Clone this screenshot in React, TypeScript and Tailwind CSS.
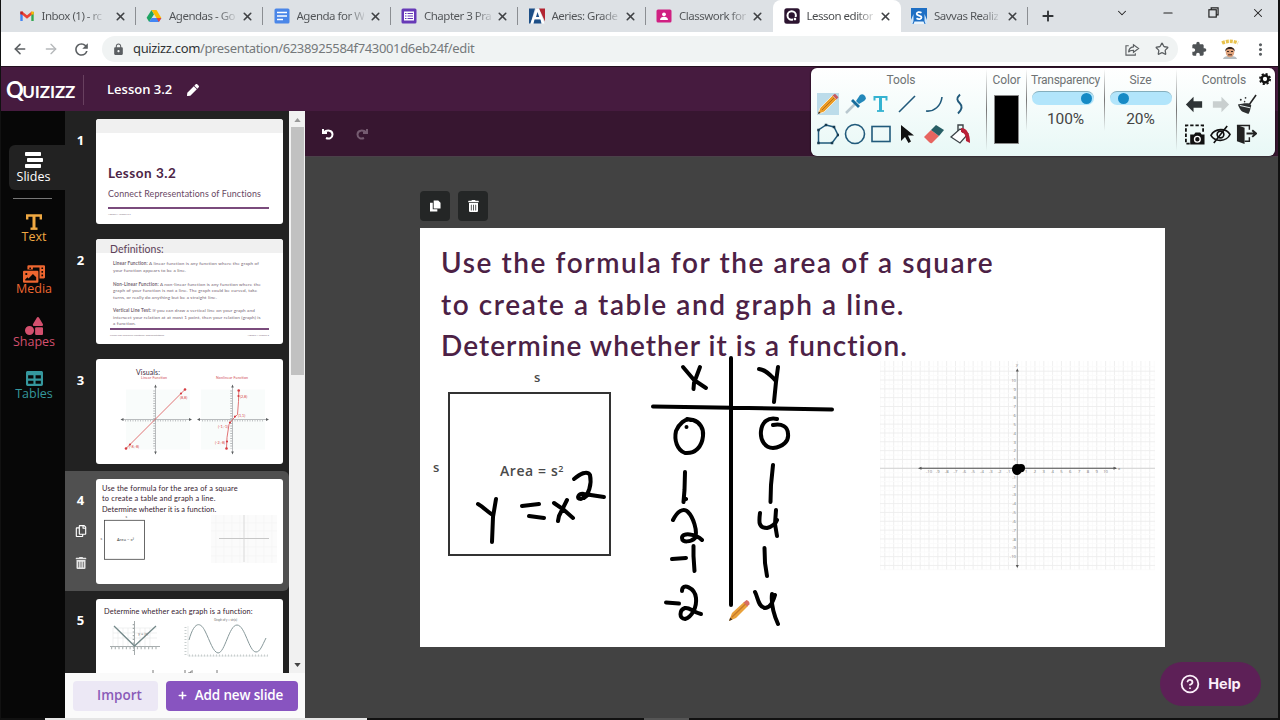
import React from 'react';
import { ArrowLeft, ArrowRight, Star, ChevronDown, Minus, Plus, X, CircleHelp } from 'lucide-react';
import { MdRefresh, MdLock, MdExtension, MdMoreVert } from 'react-icons/md';
import { FaTable, FaShapes, FaTrashAlt, FaRegCopy, FaPhotoVideo, FaPen } from 'react-icons/fa';

function Gmail() {
  return (
    <svg viewBox="0 0 16 16" className="h-4 w-4">
      <path d="M2.500 13V4" stroke="#4285f4" strokeWidth="2.400" />
      <path d="M13.500 13V4" stroke="#34a853" strokeWidth="2.400" />
      <path d="M2.500 4.500L8 9l5.500-4.500" fill="none" stroke="#ea4335" strokeWidth="2.600" />
      <path d="M12.300 3.400h2.400v3h-2.400z" fill="#fbbc04" />
      <path d="M1.300 3.400h2.400v3H1.300z" fill="#c5221f" />
    </svg>
  );
}
function Drive() {
  return (
    <svg viewBox="0 0 16 16" className="h-4 w-4">
      <path d="M5.500 2L8 6.300 3.200 14 .6 9.800z" fill="#1fa463" />
      <path d="M5.500 2h5l4.900 8h-4.900z" fill="#fbbc04" />
      <path d="M3.200 14l2.300-4h9.900l-2.500 4z" fill="#4285f4" />
      <path d="M12.900 14l-2.400-4h4.900z" fill="#ea4335" />
    </svg>
  );
}
function Docs() {
  return (
    <svg viewBox="0 0 16 16" className="h-4 w-4">
      <rect x=".5" y=".5" width="15" height="15" rx="1.500" fill="#4a86e8" />
      <path d="M3 4.500h10M3 8h10M3 11.500h6" stroke="#fff" strokeWidth="1.700" />
    </svg>
  );
}
function Forms() {
  return (
    <svg viewBox="0 0 16 16" className="h-4 w-4">
      <rect x=".5" y=".5" width="15" height="15" rx="1.500" fill="#673ab7" />
      <rect x="3" y="3.500" width="10" height="9" fill="#fff" />
      <path d="M4 5.500h1.500M4 8h1.500M4 10.500h1.500M6.500 5.500H12M6.500 8H12M6.500 10.500H12" stroke="#673ab7" strokeWidth="1.200" />
    </svg>
  );
}
function Aeries() {
  return (
    <svg viewBox="0 0 16 16" className="h-4 w-4">
      <path d="M0 .5h6L1.500 15.500H0z" fill="#1d4f87" />
      <path d="M10 .5h6v13z" fill="#b32431" />
      <path d="M1.500 15.500L7 1h3l5.500 14.500h-3.300L11 11H6L4.500 15.500z" fill="#fff" />
      <path d="M7 9l1.500-5L10.200 9z" fill="#1d4f87" />
      <path d="M5.500 11.500h6l1 4h-8z" fill="#1d4f87" />
    </svg>
  );
}
function Classroom() {
  return (
    <svg viewBox="0 0 16 16" className="h-4 w-4">
      <rect x=".5" y="1.500" width="15" height="13" rx="1.500" fill="#d02082" />
      <circle cx="8" cy="6.300" r="1.900" fill="#fff" />
      <path d="M4 12c0-2.500 2-3.300 4-3.300s4 .8 4 3.300z" fill="#fff" />
    </svg>
  );
}
function Quiz() {
  return (
    <svg viewBox="0 0 16 16" className="h-4 w-4">
      <rect x=".3" y=".3" width="15.400" height="15.400" rx="2.500" fill="#2c1430" />
      <circle cx="7.700" cy="7.500" r="4.200" fill="none" stroke="#fff" strokeWidth="2" />
      <rect x="9.400" y="9.500" width="3.200" height="3.200" fill="#fff" stroke="#2c1430" strokeWidth=".8" />
    </svg>
  );
}
function Savvas() {
  return (
    <svg viewBox="0 0 16 16" className="h-4 w-4">
      <rect width="16" height="16" fill="#1e6fc4" />
      <path d="M0 12l2.500-6v7l-1 3H0zM16 12l-2.500-6v7l1 3H16z" fill="#cfe6fa" />
      <path d="M2.500 16l1-2.500h9l1 2.500z" fill="#e8f4fd" />
      <path d="M10.500 4.800C8.500 3.500 5.700 4 5.700 5.900s4.800 1.400 4.800 3.400-3 2.300-5 1" fill="none" stroke="#fff" strokeWidth="1.800" />
    </svg>
  );
}

const tabs = [
  { icon: <Gmail />, title: 'Inbox (1) - rc' },
  { icon: <Drive />, title: 'Agendas - Go' },
  { icon: <Docs />, title: 'Agenda for W' },
  { icon: <Forms />, title: 'Chapter 3 Pra' },
  { icon: <Aeries />, title: 'Aeries: Grade' },
  { icon: <Classroom />, title: 'Classwork for' },
  { icon: <Quiz />, title: 'Lesson editor', active: true },
  { icon: <Savvas />, title: 'Savvas Realiz' },
];

function TabStrip() {
  return (
    <div className="flex h-8 shrink-0 bg-[#dde1e5] pl-[7px] font-['Noto_Sans','Open_Sans',sans-serif] text-[11.500px] text-[#505356]">
      {tabs.map((t, i) => (
        <div
          key={t.title}
          className={
            t.active
              ? 'flex w-[127.500px] items-center rounded-t-lg bg-white pl-[10.500px]'
              : 'flex w-[127.500px] items-center pl-[10.500px]'
          }
        >
          {t.icon}
          <span
            className={
              t.active
                ? 'mr-auto ml-[7px] bg-gradient-to-r from-[#454749] from-75% to-[#45474930] bg-clip-text tracking-[-0.500px] whitespace-nowrap text-transparent'
                : 'mr-auto ml-[7px] bg-gradient-to-r from-[#505356] from-75% to-[#50535630] bg-clip-text tracking-[-0.500px] whitespace-nowrap text-transparent'
            }
          >
            {t.title}
          </span>
          <X className="mr-[8px] h-[13px] w-[13px] text-[#3f4245]" strokeWidth={3} />
          <span className={i === 5 || i === 6 ? 'h-[18px] w-px' : 'h-[18px] w-px bg-[#8b8e92]'} />
        </div>
      ))}
      <Plus className="mt-[8px] ml-[12px] h-4 w-4 text-[#303336]" strokeWidth={2.800} />
      <div className="ml-auto flex w-[163px] items-start justify-between pt-[6px] pr-[13px] text-[#222]">
        <ChevronDown className="h-[14px] w-[14px]" strokeWidth={1.800} />
        <Minus className="h-[14px] w-[14px]" strokeWidth={2} />
        <svg viewBox="0 0 12 12" className="mt-[1px] h-[11px] w-[11px]" fill="none" stroke="#222" strokeWidth="1.300">
          <rect x="1" y="3" width="8" height="8" />
          <path d="M3.500 3V1H11v7.500H9" />
        </svg>
        <X className="h-[14px] w-[14px]" strokeWidth={1.800} />
      </div>
    </div>
  );
}

function AddressBar() {
  return (
    <div className="flex h-[34px] shrink-0 items-center bg-white font-['Noto_Sans','Open_Sans',sans-serif] text-[#5b5f62]">
      <ArrowLeft className="ml-[11px] h-4 w-4" strokeWidth={2.300} />
      <ArrowRight className="ml-[15px] h-4 w-4 text-[#b5b8ba]" strokeWidth={2} />
      <MdRefresh className="ml-[13px] h-[19px] w-[19px]" />
      <div className="ml-[11px] flex h-[26px] w-[1076px] items-center rounded-full bg-[#f0f3f3] pl-[10px]">
        <MdLock className="h-[13px] w-[13px]" />
        <span className="ml-[8px] text-[13px] tracking-[-0.350px] text-[#75797b]">
          <span className="text-[#303336]">quizizz.com</span>/presentation/6238925584f743001d6eb24f/edit
        </span>
        <svg viewBox="0 0 16 16" className="mr-[15px] ml-auto h-[15px] w-[15px]" fill="none" stroke="#5b5f62" strokeWidth="1.200">
          <path d="M4 4H1v10h10v-2M9 3l5.500 4L9 11V8.800C6 8.800 4.500 9.500 3.800 11 4 7.500 6 5.500 9 5.200z" />
        </svg>
        <Star className="mr-[9px] h-[14px] w-[14px]" strokeWidth={2.200} />
      </div>
      <MdExtension className="ml-[13px] h-4 w-4 text-[#4f5356]" />
      <svg viewBox="0 0 20 22" className="ml-[13px] h-[22px] w-5">
        <path d="M2 5Q10 1.500 18 5" fill="none" stroke="#e8c24e" strokeWidth="3.500" strokeDasharray="3 1" />
        <path d="M3 21c1-3 4-3 7-3s6 0 7 3z" fill="#b5bcc0" />
        <ellipse cx="10" cy="14" rx="4.300" ry="5.300" fill="#dfa27c" />
        <path d="M5.300 13.500c-.6-6 10-6 9.400 0-1-2-2-2.500-4.700-2.500s-3.700.5-4.700 2.500z" fill="#33241f" />
        <path d="M7 13.500h2M11 13.500h2M8 16.800h4" stroke="#3d2821" strokeWidth="1" />
      </svg>
      <MdMoreVert className="ml-[11px] h-[19px] w-[19px]" />
    </div>
  );
}

function AppHeader() {
  return (
    <div className="flex h-[45px] shrink-0 items-center bg-[#461b3f] text-white">
      <div className="flex w-[76px] items-baseline pl-[5px] font-['Lato',sans-serif] font-bold">
        <span className="text-[22px] leading-none tracking-[-1.500px]">Q</span>
        <span className="text-[17px] leading-none tracking-[-0.100px]">UIZIZZ</span>
      </div>
      <div className="ml-[6px] h-[30px] w-px bg-[#68405f]" />
      <span className="ml-[23px] w-[66px] font-['Open_Sans',sans-serif] text-[13px] font-semibold whitespace-nowrap">Lesson 3.2</span>
      <FaPen className="ml-[14px] h-[12px] w-[12px]" />
    </div>
  );
}

function Rail() {
  const items = [
    {
      label: 'Text',
      color: 'text-[#f0a943]',
      icon: (
        <svg viewBox="0 0 16 16" className="h-4 w-4" fill="none" stroke="currentColor">
          <path d="M1.200 5.500V1.500h13.600v4" strokeWidth="2.400" />
          <path d="M8 1v14" strokeWidth="3" />
          <path d="M4.500 14.700h7" strokeWidth="2.400" />
        </svg>
      ),
    },
    { label: 'Media', color: 'text-[#ed6630]', icon: <FaPhotoVideo className="h-[18px] w-[22px]" /> },
    { label: 'Shapes', color: 'text-[#d3506e]', icon: <FaShapes className="h-[18px] w-[18px]" /> },
    { label: 'Tables', color: 'text-[#35979d]', icon: <FaTable className="h-[17px] w-[17px]" /> },
  ];
  return (
    <div className="w-[64px] shrink-0 bg-[#070707] pt-[34px] font-['Open_Sans',sans-serif] text-[12.500px]">
      <div className="ml-[8px] flex h-[45px] w-[56px] flex-col items-center rounded-l-md bg-[#222] pt-[7px] pr-[7px] text-white">
        <svg viewBox="0 0 18 16" className="h-4 w-[18px]" fill="#fff">
          <rect x="0" y="0" width="16" height="4" rx=".8" />
          <rect x="2" y="6" width="16" height="4" rx=".8" />
          <rect x="0" y="12" width="16" height="4" rx=".8" />
        </svg>
        <span className="leading-[17px]">Slides</span>
      </div>
      <div className="mt-[8px] ml-[12px] h-px w-[39px] bg-[#777]" />
      <div className="flex flex-col pt-[13px] pl-[2px]">
        {items.map((it) => (
          <div key={it.label} className={'flex h-[52.300px] flex-col items-center ' + it.color}>
            <span className="flex h-[19px] items-center justify-center">{it.icon}</span>
            <span className="leading-[12px]">{it.label}</span>
          </div>
        ))}
      </div>
    </div>
  );
}

function Thumb1() {
  return (
    <div className="h-full font-['Lato',sans-serif] text-[#4c2547]">
      <div className="h-[14px] bg-[#f0f0f0]" />
      <div className="px-[12px] pt-[31px]">
        <div className="text-[13.500px] leading-[18px] font-bold tracking-[0.500px]">Lesson 3.2</div>
        <div className="mt-[5px] text-[8.900px] leading-[13px] tracking-[0.130px] whitespace-nowrap text-[#674763]">Connect Representations of Functions</div>
        <div className="mt-[7px] h-[1.500px] w-[161px] bg-[#7a4b7c]" />
        <div className="mt-[4px] text-[2.500px] leading-[4px] text-[#8a7a88]">Algebra 1 Lesson 3.2</div>
      </div>
    </div>
  );
}
function Thumb2() {
  return (
    <div className="h-full font-['Lato',sans-serif] text-[#5d4159]">
      <div className="h-[14px] bg-[#f0f0f0] pl-[14px] text-[10.500px] leading-[20px] tracking-[0.030px]">Definitions:</div>
      <div className="pt-[7px] pl-[17px] text-[4.600px] leading-[6.650px] tracking-[0.130px] whitespace-nowrap text-[#756673]">
        <p><b>Linear Function:</b> A linear function is any function where the graph of</p>
        <p>your function appears to be a line.</p>
        <p className="mt-[7.300px]"><b>Non-Linear Function:</b> A non-linear function is any function where the</p>
        <p>graph of your function is not a line. The graph could be curved, take</p>
        <p>turns, or really do anything but be a straight line.</p>
        <p className="mt-[6.500px]"><b>Vertical Line Test:</b> If you can draw a vertical line on your graph and</p>
        <p>intersect your relation at at most 1 point, then your relation (graph) is</p>
        <p>a function.</p>
      </div>
      <div className="mt-[1px] ml-[14px] h-[1.500px] w-[159px] bg-[#7a4b7c]" />
      <div className="mt-[3px] flex justify-between pr-[14px] pl-[14px] text-[2.600px] leading-[4px] text-[#8a7a88]">
        <span>Linear and nonlinear functions: Representations</span>
        <span>Algebra 1 Lesson 3</span>
      </div>
    </div>
  );
}
function Thumb3() {
  return (
    <svg viewBox="0 0 187 104" className="h-[105px] w-[187px]" fontFamily="Lato, sans-serif">
      <rect x="30" y="30" width="64" height="60" fill="#f9fcfb" />
      <rect x="105" y="30" width="64" height="60" fill="#f9fcfb" />
      <text x="40" y="15.500" fontSize="7" textLength="24" fill="#3d2a3b">Visuals:</text>
      <text x="45" y="19.500" fontSize="3.500" textLength="26" fill="#cf4a50">Linear Function</text>
      <text x="120" y="19.500" fontSize="3.500" textLength="32" fill="#cf4a50">Nonlinear Function</text>
      <g stroke="#9da0a3" strokeWidth=".7">
        <path d="M26 60h68M59.500 26v68M102 60h70M136.500 26v68" />
        <path d="M29 61.200h62M106 61.200h62" strokeWidth="1.600" strokeDasharray="1 1.500" opacity=".6" />
        <path d="M58.200 31v58M135.200 31v58" strokeWidth="2" strokeDasharray="1 1.500" opacity=".7" />
      </g>
      <path d="M24.500 60l3-1.500v3zM96 60l-3-1.500v3zM101 60l3-1.500v3zM173 60l-3-1.500v3zM59.500 25l-1.300 3h2.600zM59.500 95l-1.300-3h2.600zM136.500 25l-1.300 3h2.600zM136.500 95l-1.300-3h2.600z" fill="#5c5f61" />
      <path d="M30 89L89 30" stroke="#d95052" strokeWidth=".8" />
      <path d="M130.500 89l.5-11 2-13 3.500-5 5-5 1-13 .3-11" fill="none" stroke="#d95052" strokeWidth=".8" />
      <g fill="#d63c42">
        <circle cx="30" cy="89" r="1.300" /><circle cx="34" cy="85" r="1.100" /><circle cx="85" cy="34" r="1.100" /><circle cx="89" cy="30" r="1.300" />
        <circle cx="130.500" cy="89" r="1.300" /><circle cx="131" cy="82" r="1.100" /><circle cx="134" cy="63" r="1.100" /><circle cx="139" cy="57" r="1.100" /><circle cx="142.500" cy="36.500" r="1.100" /><circle cx="142.700" cy="31" r="1.300" />
        <text x="84" y="39" fontSize="3.800">(8,8)</text><text x="33" y="88.500" fontSize="3.800">(-8,-8)</text>
        <text x="144" y="38" fontSize="3.800">(2,8)</text><text x="142" y="57.500" fontSize="3.800">(1,1)</text><text x="122" y="68" fontSize="3.800">(-1,-1)</text><text x="119" y="84.500" fontSize="3.800">(-2,-8)</text>
      </g>
    </svg>
  );
}
function Thumb4() {
  return (
    <div className="h-full font-['Lato',sans-serif]">
      <div className="pt-[5px] pl-[6px] text-[7.400px] leading-[10.400px] tracking-[0.180px] whitespace-nowrap text-[#36212f]">
        <p>Use the formula for the area of a square</p>
        <p>to create a table and graph a line.</p>
        <p className="tracking-[0.040px]">Determine whether it is a function.</p>
      </div>
      <svg viewBox="0 0 187 69" className="h-[69px] w-[187px]" fontFamily="Open Sans, sans-serif" fill="#333">
        <rect x="8.500" y="5.300" width="40" height="39" fill="#fff" stroke="#444" strokeWidth=".8" />
        <text x="29.500" y="3" fontSize="3.500">s</text>
        <text x="4.500" y="25" fontSize="3.500">s</text>
        <text x="21" y="25.500" fontSize="4.200" textLength="17">Area = s²</text>
        <rect x="115" y="-1" width="66" height="49" fill="#fbfbfb" />
        <path d="M120 0v48M128 0v48M136 0v48M144 0v48M152 0v48M160 0v48M168 0v48M176 0v48M115 8h66M115 16h66M115 32h66M115 41h66" stroke="#f5f5f5" strokeWidth=".7" />
        <path d="M123 23.500h50" stroke="#bababa" strokeWidth=".8" />
        <path d="M148 0v47" stroke="#d2d2d2" strokeWidth=".8" />
      </svg>
    </div>
  );
}
function Thumb5() {
  return (
    <div className="h-full font-['Lato',sans-serif]">
      <div className="pt-[7px] pl-[8px] text-[7.400px] leading-[12px] tracking-[0.110px] whitespace-nowrap text-[#36212f]">Determine whether each graph is a function:</div>
      <svg viewBox="0 19 187 85" className="h-[85px] w-[187px]" fill="none">
        <path d="M17 29v20M22 29v20M27 29v20M32 29v20M44 29v20M49 29v20M54 29v20M17 29h44M17 34h44M17 39h44" stroke="#e5e8e8" strokeWidth=".6" />
        <path d="M14 47.500h50M38.500 22v34" stroke="#8f9798" strokeWidth=".8" />
        <path d="M15 49h47" stroke="#b2b8b8" strokeWidth="2.500" strokeDasharray="1.200 2.500" />
        <path d="M37.700 25v28" stroke="#a2a9a9" strokeWidth="2" strokeDasharray="1.200 2.500" />
        <path d="M18 27l20.500 20L60 27" stroke="#74898a" strokeWidth="1.300" />
        <text x="42" y="36" fontSize="4" fill="#777">y = |x|</text>
        <text x="118" y="22" fontSize="3.200" fill="#777" textLength="23">Graph of y = sin(x)</text>
        <path d="M92 27v30h80" stroke="#d3d8d8" strokeWidth=".6" />
        <path d="M89.500 28v28M93 56.500h79" stroke="#c9cfcf" strokeWidth="2" strokeDasharray="1 2" />
        <path d="M93 41C98 23 104 22 109 32c5 10 8 21 13 22 7 0 11-28 19-28 8 0 12 27 19 27 4 0 6-6 10-14" stroke="#87989a" strokeWidth="1" />
        <path d="M57 71v6M89 71v6M97 72c-3 0-3 1-3 5M92 74h5M121 71v6M130 75h5" stroke="#555" strokeWidth=".8" />
      </svg>
    </div>
  );
}

function SlideRow({ n, selected, children }: { n: number; selected?: boolean; children: React.ReactNode }) {
  return (
    <div className={selected ? 'flex h-[120px] shrink-0 rounded-r-md bg-[#505050] pt-[8px]' : 'flex h-[120px] shrink-0 pt-[8px]'}>
      <div className="flex w-[31px] flex-col items-center pt-[13px] font-['Open_Sans',sans-serif] text-[13px] leading-[17px] font-bold text-white">
        <span>{n}</span>
        {selected && (
          <>
            <FaRegCopy className="mt-[16px] h-3 w-3" />
            <FaTrashAlt className="mt-[20px] h-[12px] w-[12px] text-[#e5e5e5]" />
          </>
        )}
      </div>
      <div className="h-[105px] w-[187px] overflow-hidden rounded-[3px] bg-white">{children}</div>
    </div>
  );
}

function SlidesPanel() {
  return (
    <div className="flex w-[240px] shrink-0 flex-col bg-[#222]">
      <div className="flex h-[562px] shrink-0">
        <div className="flex w-[224px] flex-col overflow-hidden">
          <SlideRow n={1}><Thumb1 /></SlideRow>
          <SlideRow n={2}><Thumb2 /></SlideRow>
          <SlideRow n={3}><Thumb3 /></SlideRow>
          <SlideRow n={4} selected><Thumb4 /></SlideRow>
          <SlideRow n={5}><Thumb5 /></SlideRow>
        </div>
        <div className="flex w-4 flex-col items-center bg-[#f1f1f1]">
          <svg viewBox="0 0 8 5" className="mt-[7px] h-[4px] w-[7px] shrink-0"><path d="M0 5L4 0l4 5z" fill="#999" /></svg>
          <div className="mt-[5px] h-[248px] w-[13px] shrink-0 bg-[#c1c1c1]" />
          <svg viewBox="0 0 8 5" className="mt-auto mb-[6px] h-[4px] w-[7px] shrink-0"><path d="M0 0l4 5 4-5z" fill="#444" /></svg>
        </div>
      </div>
      <div className="flex h-[45px] items-center gap-2 bg-[#fafafa] pl-[8px] font-['Open_Sans',sans-serif] text-[13.500px] font-semibold">
        <button className="h-[30px] w-[85px] rounded bg-[#ece8f5] pl-[8px] text-[#8a5bb8]">Import</button>
        <button className="flex h-[30px] w-[132px] items-center justify-center gap-[7px] rounded bg-[#8854c0] pr-[4px] tracking-[-0.150px] whitespace-nowrap text-white">
          <Plus className="h-[11px] w-[11px]" strokeWidth={3.500} />
          Add new slide
        </button>
      </div>
    </div>
  );
}

const units = [-10, -9, -8, -7, -6, -5, -4, -3, -2, -1, 1, 2, 3, 4, 5, 6, 7, 8, 9, 10];
const vLines = Array.from({ length: 63 }, (_, i) => i - 31);
const hLines = Array.from({ length: 47 }, (_, i) => i - 23);

function CoordinateGrid() {
  return (
    <svg viewBox="878 360 279 212" className="absolute top-[132px] left-[458px] h-[212px] w-[279px]" fontFamily="Open Sans, sans-serif" fontSize="4.200" fill="#777">
      {vLines.map((k) => (
        <path key={k} d={`M${1017.3 + k * 4.415} 361V570`} stroke={k % 2 ? '#fafafa' : '#ededed'} strokeWidth=".9" />
      ))}
      {hLines.map((k) => (
        <path key={k} d={`M880 ${468.3 + k * 4.415}H1155`} stroke={k % 2 ? '#fafafa' : '#ededed'} strokeWidth=".9" />
      ))}
      <path d="M880 468.300H1155" stroke="#ccc" strokeWidth=".8" />
      <path d="M920 468.300h196" stroke="#555" strokeWidth="1.100" />
      <path d="M1017.300 370v197" stroke="#b0b0b0" strokeWidth="1" />
      <path d="M918 468.300l3.500-1.500v3zM1117 468.300l-3.500-1.500v3zM1017.300 368.500l-1.500 3h3zM1017.300 568l-1.500-3h3z" fill="#555" />
      <text x="1118" y="469.800">x</text>
      <text x="1016" y="366">y</text>
      {units.map((u) => (
        <text key={u} x={1017.3 + u * 8.83} y="473.200" textAnchor="middle">{u}</text>
      ))}
      {units.map((u) => (
        <text key={u} x="1016" y={470 - u * 8.83} textAnchor="end">{u}</text>
      ))}
    </svg>
  );
}

function Ink() {
  return (
    <svg viewBox="420 228 745 419" className="absolute inset-0 h-[419px] w-[745px]" fill="none" stroke="#000" strokeWidth="4" strokeLinecap="round" strokeLinejoin="round">
      <path d="M731 358V605M653 406.500L832 409.500" />
      <path d="M683 367l11 13 12 8M700 367l-6 16-.5 6" />
      <path d="M759 369c8 1 12 7 17 12M778 367l-2 15-2 20" />
      <path d="M691 420c-6-2-12 4-15 11-2 9 1 19 9 22 10 1 17-6 18-17 1-7-3-14-10-16l-6-1M686.500 427v.1" />
      <path d="M777 419c-9-2-15 3-16 12-1 9 4 17 12 17 10-1 16-7 15-14 0-7-6-11-15-9" />
      <path d="M685 472l-.5 18-1 12M684 500l2-1M773 465l-2 20-.5 17" />
      <path d="M673 520c4-8 10-13 15-8 5 5 10 19 7 26-4 4-13 5-13 0 0-6 14-4 20 2" />
      <path d="M760 513c-1 8-2 15 7 15 5-1 9-5 10-8M776 510l-1 14 2 12" />
      <path d="M672 559l14-1M693.500 546v10l1 15M764.500 548l.5 15 2 13" />
      <path d="M666 602.500l13 1M682 591c0-9 13-3 14 7 1 9-4 19-11 21-6 0-6-9 0-11 5-1 7 4 16 6" />
      <path d="M755 592c3 5 3 15 10 16 5 0 8-6 10-13M772 594c-1 9 2 21 6 30" />
      <path d="M478 504c7 4 10 9 15 11M496 499l-3 18-1 25M522 506l17-2M529 516l15 2" />
      <path d="M554 503l10 7 9 8M567 500l-8 16-1 5" />
      <path d="M574 479c6-5 13-9 16-4 2 9-1 21-9 24-6 0-2-6 3-5l20 3" />
      <path d="M584 498l5-4" />
      <circle cx="1017" cy="469" r="5" fill="#000" stroke="none" />
      <circle cx="1021" cy="468" r="4" fill="#000" stroke="none" />
      <circle cx="1017" cy="470.500" r="4.500" fill="#000" stroke="none" />
      <path d="M1018 471l4-1" />
      <g stroke="none">
        <path d="M729 621l3-8 12-11 4 4-12 12z" fill="#e9a13b" />
        <path d="M729 621l1.200-3.500 2.300 2z" fill="#4b3621" />
        <path d="M743.500 602.500l3-2.500q3.500 1 3 4.500l-2.500 2z" fill="#d86e63" />
        <path d="M732 617l13-12.500" stroke="#c6792a" strokeWidth="1.200" />
      </g>
    </svg>
  );
}

function Slide() {
  return (
    <div className="relative h-[419px] w-[745px] bg-white font-['Open_Sans',sans-serif] text-[#4a4a4a]">
      <div className="pt-[14px] pl-[21px] font-['Lato',sans-serif] text-[28px] leading-[41.700px] font-semibold whitespace-nowrap text-[#4c2145]">
        <p className="tracking-[1.580px]">Use the formula for the area of a square</p>
        <p className="tracking-[1.580px]">to create a table and graph a line.</p>
        <p className="tracking-[1.050px]">Determine whether it is a function.</p>
      </div>
      <span className="absolute top-[140px] left-[114px] text-[13px] leading-[18px] font-semibold">s</span>
      <span className="absolute top-[230px] left-[13px] text-[13px] leading-[18px] font-semibold">s</span>
      <div className="absolute top-[164px] left-[28px] flex h-[164px] w-[163px] items-center justify-center border-2 border-[#333] pb-[7px] pl-[5px] text-[14px] font-semibold tracking-[0.600px]">
        <span>Area = s<sup className="text-[9px]">2</sup></span>
      </div>
      <CoordinateGrid />
      <Ink />
    </div>
  );
}

function Stage() {
  return (
    <div className="flex min-w-0 flex-1 flex-col bg-[#424242]">
      <div className="flex h-[46px] shrink-0 items-center border-b border-[#4b4049] bg-[#371630] pl-[17px] text-white">
        <svg viewBox="0 0 12 12" className="h-[12px] w-[12px]" fill="none" stroke="#fff" strokeWidth="2">
          <path d="M1 1v4h4M1.500 4.500C5 1.500 10.500 2 10.500 6.500c0 3.500-3.500 5-6.500 3.500" />
        </svg>
        <svg viewBox="0 0 12 12" className="ml-[22px] h-[12px] w-[12px] -scale-x-100" fill="none" stroke="#755b70" strokeWidth="2">
          <path d="M1 1v4h4M1.500 4.500C5 1.500 10.500 2 10.500 6.500c0 3.500-3.500 5-6.500 3.500" />
        </svg>
      </div>
      <div className="flex gap-[8px] pt-[34px] pb-[7px] pl-[115px] text-white">
        <div className="flex h-[30px] w-[30px] items-center justify-center rounded bg-[#242626]">
          <svg viewBox="0 0 12 13" className="h-[12px] w-[11px]" fill="#fff">
            <path d="M0 3h3v7h5v2.500H0z" />
            <path d="M4 .5h5L11.500 3v6.300H4z" />
          </svg>
        </div>
        <div className="flex h-[30px] w-[30px] items-center justify-center rounded bg-[#242626]"><FaTrashAlt className="h-[12px] w-[11px]" /></div>
      </div>
      <div className="pl-[115px]"><Slide /></div>
    </div>
  );
}

function ToolIcons() {
  const c = 'h-[22px] w-[22px]';
  const blue = '#215a7b';
  return (
    <div className="grid grid-cols-[repeat(6,26.400px)] grid-rows-[30px_30px] place-items-center pl-[4px]">
      <svg viewBox="0 0 22 22" className={c}>
        <rect width="22" height="22" fill="#bcdcea" />
        <path d="M1 21l2-6L15.500 2.500l4 4L7 19z" fill="#eb9c27" stroke="#fff4dd" strokeWidth=".8" />
        <path d="M5 17L17 5" stroke="#b96f18" />
        <path d="M15.500 2.500L18 .8l3.500 3.500-2 2.200z" fill="#c55b61" />
        <path d="M1 21l.8-2.500L3.500 20z" fill="#222" />
      </svg>
      <svg viewBox="0 0 22 22" className={c}>
        <path d="M2 20L12 10" stroke="#b9c8cf" strokeWidth="2.500" />
        <path d="M9 6l7 7-2 2-7-7z" fill="#176c9c" />
        <path d="M12 8l4-6q3-2 5 1t-1 5l-5 3z" fill="#2388ba" />
      </svg>
      <svg viewBox="0 0 22 22" className={c}>
        <path d="M4.500 7.500V4h12v3.500" fill="none" stroke="#35b3d1" strokeWidth="2" />
        <path d="M10.500 4v14" fill="none" stroke="#35b3d1" strokeWidth="3" />
        <path d="M7 18h7" fill="none" stroke="#35b3d1" strokeWidth="1.800" />
      </svg>
      <svg viewBox="0 0 22 22" className={c}><path d="M3 19L19 3" stroke={blue} strokeWidth="1.600" /></svg>
      <svg viewBox="0 0 22 22" className={c}><path d="M3 18C11 19 18 13 19 4" fill="none" stroke={blue} strokeWidth="1.600" /></svg>
      <svg viewBox="0 0 22 22" className={c}><path d="M11 1.500c-4 4-3 6 0 9s2 6-2 10" fill="none" stroke={blue} strokeWidth="1.900" /></svg>
      <svg viewBox="0 0 22 22" className={c}>
        <path d="M1.500 20V7L9 2l8 2 4 8-6 8z" fill="none" stroke={blue} strokeWidth="1.500" />
        <path d="M1.500 20v0M1.500 7v0M9 2v0M17 4v0M21 12v0M15 20v0" stroke="#173b50" strokeWidth="2.500" strokeLinecap="square" />
      </svg>
      <svg viewBox="0 0 22 22" className={c}><circle cx="11" cy="11" r="9.500" fill="none" stroke={blue} strokeWidth="1.600" /></svg>
      <svg viewBox="0 0 22 22" className={c}><rect x="2" y="3.500" width="18" height="15" fill="none" stroke={blue} strokeWidth="1.600" /></svg>
      <svg viewBox="0 0 22 22" className={c}><path d="M5 2v16l4-4 3.500 6 2.500-1.500-3-6h6z" fill="#111" /></svg>
      <svg viewBox="0 0 22 22" className={c}>
        <path d="M1 14L8 7l8 6-7 7q-1 1-3-1z" fill="#e76560" />
        <path d="M8 7l5-5 8 5-5 6z" fill="#285e65" />
      </svg>
      <svg viewBox="0 0 22 22" className={c}>
        <path d="M2 14L11 6l8 5-8 9z" fill="#fff" stroke="#3d4347" strokeWidth="1.300" />
        <path d="M9 8V2h5v8" fill="none" stroke="#3d4347" strokeWidth="1.400" />
        <path d="M12 5c6 0 9 6 9 15l-4-2c0-5-1-8-5-9z" fill="#ba1f36" />
      </svg>
    </div>
  );
}

function ControlIcons() {
  const c = 'h-[21px] w-[21px]';
  return (
    <div className="grid grid-cols-[26.400px_26.400px_26.400px] grid-rows-[30px_30px] place-items-center pl-[4px]">
      <svg viewBox="0 0 22 22" className={c}><path d="M2 11l8-8v4.500h9v7h-9V19z" fill="#2e3436" /></svg>
      <svg viewBox="0 0 22 22" className={c}><path d="M20 11l-8-8v4.500H3v7h9V19z" fill="#c9cfcf" /></svg>
      <svg viewBox="0 0 22 22" className={c}>
        <path d="M21 1l-7 10" stroke="#222" strokeWidth="1.600" />
        <path d="M2 11c5-1 8-2 12-1l2 2c-1 3-1 6-3 9l-4-1.500C5 18 4 16 2 11z" fill="#2c3031" />
        <path d="M4 12l11 2.500" stroke="#edf7f6" strokeWidth="1" />
        <circle cx="5" cy="6" r="1" fill="#333" /><circle cx="10" cy="4" r=".9" fill="#333" /><circle cx="9" cy="8" r=".8" fill="#333" />
      </svg>
      <svg viewBox="0 0 22 22" className={c}>
        <path d="M6 20.500H2V1.500h18V8" fill="none" stroke="#111" strokeWidth="1.900" strokeDasharray="3.500 2" />
        <path d="M6.500 11h4l1.500-2h5l1.500 2h3v10.500h-15z" fill="#111" />
        <circle cx="14" cy="16" r="3" fill="none" stroke="#fff" strokeWidth="1.400" />
      </svg>
      <svg viewBox="0 0 22 22" className={c} fill="none" stroke="#111" strokeWidth="1.700">
        <path d="M1 12c4-8 16-8 20-1-4 8-16 8-20 1zM18 2L4 20" />
        <circle cx="11" cy="11" r="3.500" />
      </svg>
      <svg viewBox="0 0 22 22" className={c}>
        <path d="M1 1l8 3v17l-8-3z" fill="#222" />
        <path d="M1 1.500h13V6M14 14v4H9" fill="none" stroke="#222" strokeWidth="1.500" />
        <path d="M11 10h9M17 6.500l4 3.500-4 3.500" fill="none" stroke="#222" strokeWidth="2" />
      </svg>
    </div>
  );
}

function Toolbox() {
  return (
    <div className="absolute top-[68px] left-[810px] flex h-[88px] w-[464px] rounded-md bg-gradient-to-b from-white to-[#e8f8f6] pt-px font-['Roboto',sans-serif] text-[12px] tracking-[-0.100px] text-[#6f7374] shadow-[0_0_2px_#000]">
      <div className="w-[175px] pt-[4px]">
        <div className="h-[16px] pl-[5px] text-center leading-[14px]">Tools</div>
        <ToolIcons />
      </div>
      <div className="h-[82px] w-px bg-gradient-to-b from-transparent via-[#777] to-transparent" />
      <div className="flex w-[39px] flex-col items-center pt-[4px]">
        <div className="leading-[14px]">Color</div>
        <div className="mt-[8px] h-[49px] w-[25px] border border-[#888] bg-black" />
      </div>
      <div className="h-[62px] w-px bg-gradient-to-b from-transparent via-[#777] to-transparent" />
      <div className="flex w-[77px] flex-col items-center pt-[4px]">
        <div className="leading-[14px] tracking-[-0.250px]">Transparency</div>
        <div className="mt-[4px] mr-[6px] flex h-[14px] w-[62px] items-center justify-end rounded-full border-t border-[#84aebd] bg-[#b2e5fb] pr-[2px]">
          <div className="h-[11px] w-[11px] rounded-full bg-[#168ac5]" />
        </div>
        <div className="mt-[5px] text-[15.500px] leading-[18px] text-[#444]">100%</div>
      </div>
      <div className="h-[62px] w-px bg-gradient-to-b from-transparent via-[#777] to-transparent" />
      <div className="flex w-[71px] flex-col items-center pt-[4px]">
        <div className="leading-[14px]">Size</div>
        <div className="mt-[4px] flex h-[14px] w-[62px] items-center rounded-full border-t border-[#84aebd] bg-[#b2e5fb] pl-[8px]">
          <div className="h-[11px] w-[11px] rounded-full bg-[#168ac5]" />
        </div>
        <div className="mt-[5px] text-[15.500px] leading-[18px] text-[#444]">20%</div>
      </div>
      <div className="h-[82px] w-px bg-gradient-to-b from-transparent via-[#777] to-transparent" />
      <div className="flex-1 pt-[4px]">
        <div className="flex h-[16px] items-start justify-end pr-[4px] leading-[14px] whitespace-nowrap">
          Controls
          <svg viewBox="0 0 14 14" className="ml-[13px] h-[12px] w-[12px]">
            <circle cx="7" cy="7" r="4" fill="none" stroke="#111" strokeWidth="3" />
            <circle cx="7" cy="7" r="6" fill="none" stroke="#111" strokeWidth="2" strokeDasharray="2.500 2.210" />
          </svg>
        </div>
        <ControlIcons />
      </div>
    </div>
  );
}

export default function App() {
  return (
    <div className="relative flex h-[720px] w-[1280px] flex-col overflow-hidden border-r-2 border-l border-[#111] bg-[#111]">
      <TabStrip />
      <AddressBar />
      <div className="h-px shrink-0 bg-[#24101f]" />
      <AppHeader />
      <div className="-mt-px flex h-[607px] shrink-0">
        <Rail />
        <SlidesPanel />
        <Stage />
      </div>
      <div className="flex h-[2px] shrink-0">
        <div className="ml-[44px] w-[322px] bg-[#e5e5e5]" />
        <div className="ml-[277px] w-[45px] bg-[#555]" />
      </div>
      <Toolbox />
      <button className="absolute right-[17px] bottom-[14px] flex h-[44px] w-[101px] items-center justify-center gap-[8px] rounded-full bg-[#5d2057] font-['Inter',sans-serif] text-[14.500px] font-bold text-[#fbeffa]">
        <CircleHelp className="h-5 w-5" strokeWidth={2.200} />
        Help
      </button>
    </div>
  );
}
